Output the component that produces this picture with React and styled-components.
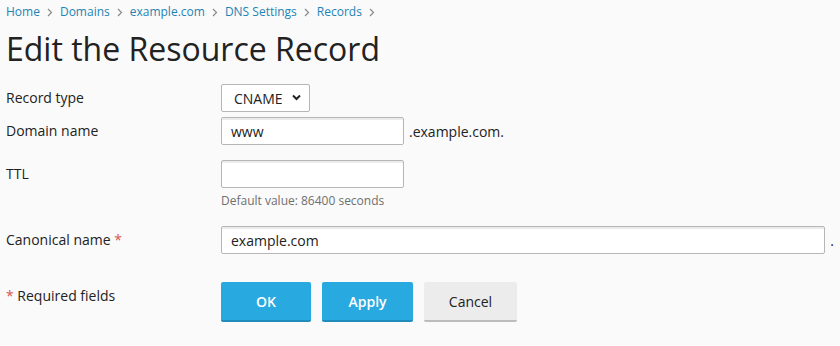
import React, { useState } from 'react'
import styled, { createGlobalStyle } from 'styled-components'

const GlobalStyle = createGlobalStyle`
  html, body {
    margin: 0;
    padding: 0;
    background: #fafafa;
  }
  body {
    font-family: "Open Sans", "DejaVu Sans", sans-serif;
    color: #222;
  }
`

const Page = styled.div`
  padding: 3px 6px 0 6px;
`

const Crumbs = styled.nav`
  display: flex;
  align-items: center;
  font-size: 12px;
  line-height: 18px;
  height: 18px;
`

const Crumb = styled.a`
  color: #1d84b5;
  text-decoration: none;
`

const Sep = styled.span`
  color: #8a8a8a;
  margin: 0 7px 0 7px;
  display: inline-flex;
  align-items: center;
`

const Title = styled.h1`
  font-size: 32px;
  font-weight: 400;
  line-height: 44px;
  margin: 6px 0 13px 0;
  color: #222;
`

const Form = styled.form`
  display: flex;
  flex-direction: column;
`

const Row = styled.div`
  display: flex;
  align-items: flex-start;
  margin-top: ${p => p.$gap || 0}px;
`

const Label = styled.label`
  width: 215px;
  flex: none;
  font-size: 14px;
  line-height: 27px;
  color: #222;
`

const Req = styled.span`
  color: #d9534f;
`

const Field = styled.div`
  display: flex;
  flex-direction: column;
  flex: ${p => (p.$grow ? 1 : 'none')};
`

const Line = styled.div`
  display: flex;
  align-items: center;
`

const Input = styled.input`
  box-sizing: border-box;
  width: ${p => p.$w ? `${p.$w}px` : '100%'};
  flex: ${p => (p.$w ? 'none' : 1)};
  height: 28px;
  padding: 0 9px;
  font-family: inherit;
  font-size: 14px;
  color: #222;
  background: #fff;
  border: 1px solid #b6b6b6;
  border-radius: 2px;
  box-shadow: inset 0 2px 0 #ebebeb;
  outline: none;
`

const Suffix = styled.span`
  font-size: 14px;
  color: #222;
  margin-left: 5px;
`

const Hint = styled.div`
  font-size: 12px;
  line-height: 16px;
  color: #6f6f6f;
  margin-top: 5px;
`

const SelectWrap = styled.div`
  position: relative;
  width: 89px;
  height: 28px;
`

const Select = styled.select`
  appearance: none;
  box-sizing: border-box;
  width: 100%;
  height: 100%;
  padding: 0 0 0 12px;
  font-family: inherit;
  font-size: 14px;
  color: #222;
  background: #fff;
  border: 1px solid #b6b6b6;
  border-radius: 2px;
  outline: none;
`

const Chevron = styled.svg`
  position: absolute;
  right: 9px;
  top: 10px;
  pointer-events: none;
`

const Buttons = styled.div`
  display: flex;
  gap: 11px;
`

const Button = styled.button`
  box-sizing: border-box;
  width: ${p => p.$w}px;
  height: 40px;
  border: none;
  border-radius: 2px;
  font-family: inherit;
  font-size: 14px;
  font-weight: ${p => (p.$primary ? 600 : 400)};
  color: ${p => (p.$primary ? '#fff' : '#222')};
  background: ${p => (p.$primary ? '#28a9df' : '#ececec')};
  border-bottom: 2px solid ${p => (p.$primary ? '#1f8cbc' : '#bcbcbc')};
  cursor: pointer;
`

const ChevronRight = () => (
  <svg width="6" height="9" viewBox="0 0 6 9">
    <path d="M1 1 L4.5 4.5 L1 8" fill="none" stroke="currentColor" strokeWidth="1.2" />
  </svg>
)

const crumbs = ['Home', 'Domains', 'example.com', 'DNS Settings', 'Records']

export default function App() {
  const [type, setType] = useState('CNAME')
  const [domain, setDomain] = useState('www')
  const [ttl, setTtl] = useState('')
  const [canonical, setCanonical] = useState('example.com')

  return (
    <>
      <GlobalStyle />
      <Page>
        <Crumbs>
          {crumbs.map(c => (
            <React.Fragment key={c}>
              <Crumb href="#">{c}</Crumb>
              <Sep><ChevronRight /></Sep>
            </React.Fragment>
          ))}
        </Crumbs>
        <Title>Edit the Resource Record</Title>
        <Form onSubmit={e => e.preventDefault()}>
          <Row>
            <Label>Record type</Label>
            <SelectWrap>
              <Select value={type} onChange={e => setType(e.target.value)}>
                <option>A</option>
                <option>AAAA</option>
                <option>CNAME</option>
                <option>MX</option>
                <option>TXT</option>
              </Select>
              <Chevron width="9" height="7" viewBox="0 0 9 7">
                <path d="M1 1.5 L4.5 5 L8 1.5" fill="none" stroke="#222" strokeWidth="2" />
              </Chevron>
            </SelectWrap>
          </Row>
          <Row $gap={5}>
            <Label>Domain name</Label>
            <Line>
              <Input $w={183} value={domain} onChange={e => setDomain(e.target.value)} />
              <Suffix>.example.com.</Suffix>
            </Line>
          </Row>
          <Row $gap={15}>
            <Label>TTL</Label>
            <Field>
              <Input $w={183} value={ttl} onChange={e => setTtl(e.target.value)} />
              <Hint>Default value: 86400 seconds</Hint>
            </Field>
          </Row>
          <Row $gap={17}>
            <Label>Canonical name <Req>*</Req></Label>
            <Field $grow>
              <Line>
                <Input value={canonical} onChange={e => setCanonical(e.target.value)} />
                <Suffix>.</Suffix>
              </Line>
            </Field>
          </Row>
          <Row $gap={28}>
            <Label><Req>*</Req> Required fields</Label>
            <Buttons>
              <Button $primary $w={90}>OK</Button>
              <Button $primary $w={91}>Apply</Button>
              <Button type="button" $w={93}>Cancel</Button>
            </Buttons>
          </Row>
        </Form>
      </Page>
    </>
  )
}
